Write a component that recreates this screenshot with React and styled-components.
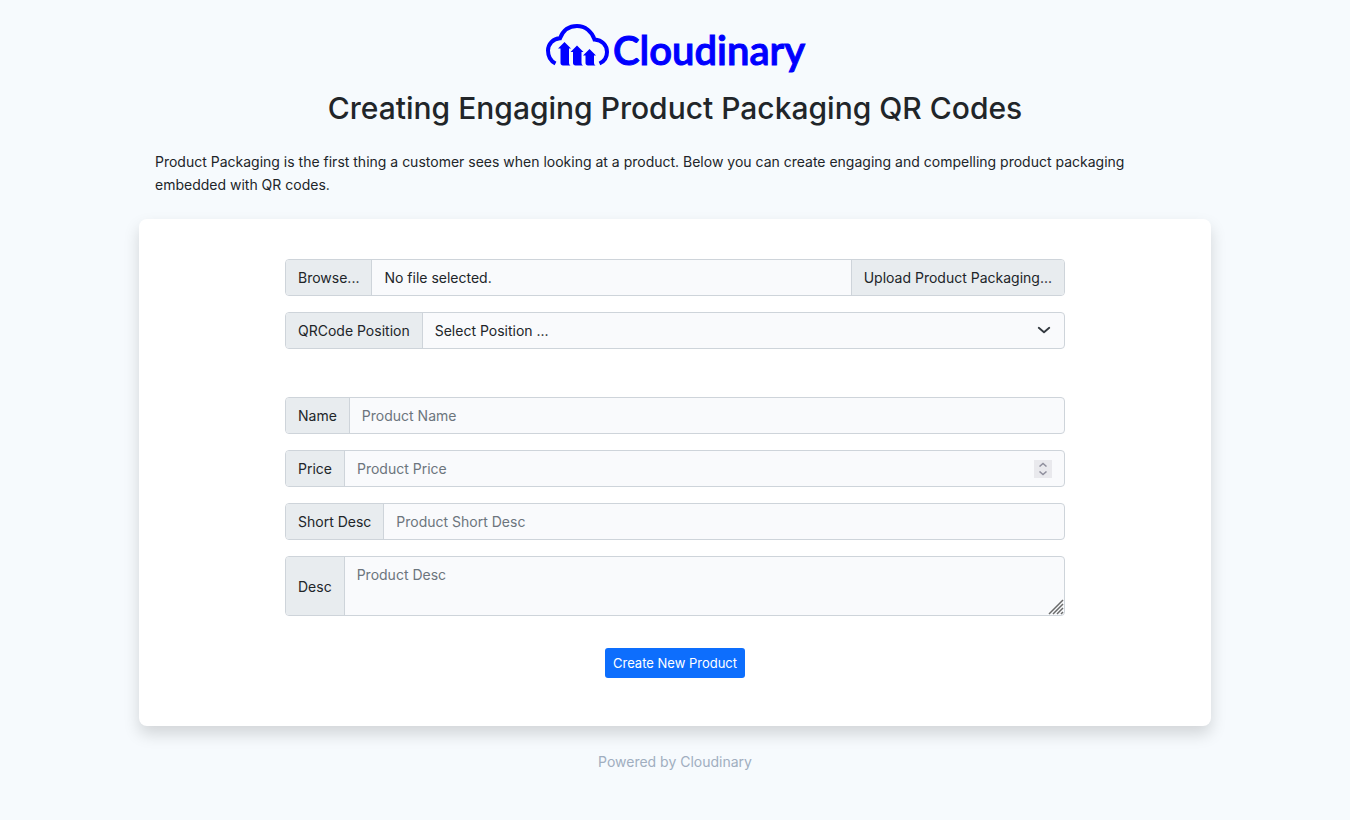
import React, { useRef, useState } from 'react';
import styled, { createGlobalStyle } from 'styled-components';

const GlobalStyle = createGlobalStyle`
  *,
  *::before,
  *::after {
    box-sizing: border-box;
  }

  body {
    margin: 0;
    background-color: #f6fafd;
    color: #212529;
    font-family: Inter, sans-serif;
    font-size: 14px;
    line-height: 23px;
  }

  input,
  select,
  textarea,
  button {
    font: inherit;
    color: inherit;
  }
`;

const Page = styled.div`
  max-width: 1072px;
  margin: 0 auto;
  padding: 24px 0 48px;
`;

const Header = styled.header`
  padding: 0 16px;
`;

const Logo = styled.svg`
  display: block;
  width: 258px;
  height: 50px;
  margin: 0 auto 16px;
  overflow: visible;
  fill: #0000ff;
`;

const Wordmark = styled.text`
  font-family: Lato, sans-serif;
  font-size: 40px;
  font-weight: 600;
  stroke: #0000ff;
  stroke-width: 1px;
`;

const Title = styled.h1`
  margin: 0 0 24px;
  font-size: 30px;
  font-weight: 500;
  line-height: 36px;
  text-align: center;
`;

const Intro = styled.p`
  max-width: 1000px;
  margin: 0 0 23px;
`;

const Card = styled.main`
  padding: 40px 16px 48px;
  border-radius: 8px;
  background-color: white;
  box-shadow: 0 8px 16px rgba(0, 0, 0, 0.15);
`;

const Form = styled.form`
  display: flex;
  flex-direction: column;
  gap: 32px;
  max-width: 780px;
  margin: 0 auto;
`;

const Fields = styled.div`
  display: flex;
  flex-direction: column;
  gap: 16px;
  margin-bottom: ${({ $spaced }) => ($spaced ? '16px' : '0')};
`;

const InputGroup = styled.div`
  position: relative;
  display: flex;
  min-height: 37px;
  overflow: hidden;
  border: 1px solid #ced4da;
  border-radius: 4px;
  background-color: #f9fafc;

  &:focus-within {
    border-color: #86b7fe;
  }
`;

const Addon = styled.label`
  display: flex;
  flex: none;
  align-items: center;
  padding: 0 12px;
  background-color: #e8ecef;
  border: 0 solid #ced4da;
  border-right-width: ${({ $end }) => ($end ? '0' : '1px')};
  border-left-width: ${({ $end }) => ($end ? '1px' : '0')};
`;

const FileName = styled.span`
  flex: 1;
  padding: 6px 12px;
`;

const FileInput = styled.input`
  position: absolute;
  inset: 0;
  width: 100%;
  opacity: 0;
  cursor: pointer;
`;

const Control = styled.input`
  flex: 1;
  min-width: 0;
  padding: 6px 12px;
  border: 0;
  outline: 0;
  background: transparent;
  appearance: none;

  &::placeholder {
    color: #6c757d;
    opacity: 1;
  }

  &[type='number'] {
    appearance: textfield;
  }

  &::-webkit-inner-spin-button {
    appearance: none;
  }
`;

const TextArea = styled(Control)`
  display: block;
  min-height: 58px;
  resize: vertical;

  &::-webkit-resizer {
    display: none;
  }
`;

const Chevron = styled.svg`
  position: absolute;
  top: 11px;
  right: 12px;
  width: 16px;
  height: 12px;
  pointer-events: none;
`;

const Grip = styled.svg`
  position: absolute;
  right: 0;
  bottom: 0;
  width: 16px;
  height: 16px;
  pointer-events: none;
`;

const Spinner = styled.div`
  display: flex;
  flex-direction: column;
  align-self: center;
  width: 18px;
  height: 18px;
  margin-right: 12px;
  background-color: #e9e9ed;
`;

const SpinButton = styled.button`
  display: flex;
  align-items: center;
  justify-content: center;
  height: 9px;
  padding: 0;
  border: 0;
  background: transparent;
`;

const SubmitButton = styled.button`
  align-self: center;
  padding: 4px 8px;
  border: 0;
  border-radius: 3px;
  background-color: #0d6efd;
  color: white;
  font-size: 13px;
  line-height: 22px;
  cursor: pointer;
`;

const Footer = styled.footer`
  margin-top: 24px;
  color: #a0aec0;
  line-height: 24px;
  text-align: center;
`;

const positions = ['Top Left', 'Top Right', 'Bottom Left', 'Bottom Right'];

function CloudinaryLogo() {
  return (
    <Logo viewBox="0 0 258 50" role="img" aria-label="Cloudinary">
      <path
        d="M9.5 39.5C4.500 37 2 32 2 26.500C2 20 7 14.500 14 14.200C17 6.500 23 2 31 2C39 2 46 7.500 48.500 15.500C56 16 61 21 61 28C61 33.500 58 37.500 53.500 39.500"
        fill="none"
        stroke="#0000ff"
        strokeWidth="4"
      />
      <path d="M18.500 18L25 24.500H23V38.500C23 40 23.500 41 24.500 41.500H17C15.500 41.500 14.500 40.500 14.500 39V24.500H12Z" />
      <path d="M31 21.500L37.500 28H35.500V38.500C35.500 40 36 41 37 41.500H29.500C28 41.500 27 40.500 27 39V28H24.500Z" />
      <path d="M43.500 25L50 31.500H48V38.500C48 40 48.500 41 49.500 41.500H42C40.500 41.500 39.500 40.500 39.500 39V31.500H37Z" />
      <Wordmark x="67" y="41">
        Cloudinary
      </Wordmark>
    </Logo>
  );
}

function PriceInput() {
  const input = useRef(null);
  return (
    <InputGroup>
      <Addon htmlFor="price">Price</Addon>
      <Control
        id="price"
        type="number"
        placeholder="Product Price"
        ref={input}
      />
      <Spinner>
        <SpinButton
          type="button"
          aria-label="Increase price"
          onClick={() => input.current.stepUp()}
        >
          <svg width="8" height="5" fill="none" stroke="#8f8f9d" strokeWidth="1.5">
            <path d="M.5 4.500 4 1.500 7.500 4.500" />
          </svg>
        </SpinButton>
        <SpinButton
          type="button"
          aria-label="Decrease price"
          onClick={() => input.current.stepDown()}
        >
          <svg width="8" height="5" fill="none" stroke="#8f8f9d" strokeWidth="1.5">
            <path d="M.5 .5 4 3.500 7.500 .5" />
          </svg>
        </SpinButton>
      </Spinner>
    </InputGroup>
  );
}

function App() {
  const [fileName, setFileName] = useState('');

  return (
    <>
      <GlobalStyle />
      <Page>
        <Header>
          <CloudinaryLogo />
          <Title>Creating Engaging Product Packaging QR Codes</Title>
          <Intro>
            Product Packaging is the first thing a customer sees when looking at
            a product. Below you can create engaging and compelling product
            packaging embedded with QR codes.
          </Intro>
        </Header>
        <Card>
          <Form onSubmit={event => event.preventDefault()}>
            <Fields $spaced>
              <InputGroup>
                <Addon as="span">Browse...</Addon>
                <FileName>{fileName || 'No file selected.'}</FileName>
                <Addon htmlFor="packaging" $end>
                  Upload Product Packaging...
                </Addon>
                <FileInput
                  id="packaging"
                  type="file"
                  onChange={event => {
                    const file = event.target.files[0];
                    setFileName(file ? file.name : '');
                  }}
                />
              </InputGroup>
              <InputGroup>
                <Addon htmlFor="position">QRCode Position</Addon>
                <Control as="select" id="position" defaultValue="">
                  <option value="">Select Position ...</option>
                  {positions.map(position => (
                    <option key={position}>{position}</option>
                  ))}
                </Control>
                <Chevron viewBox="0 0 16 16" fill="none" stroke="#343a40">
                  <path
                    d="m1 5 7 6 7-6"
                    strokeWidth="2.5"
                    strokeLinecap="round"
                    strokeLinejoin="round"
                  />
                </Chevron>
              </InputGroup>
            </Fields>
            <Fields>
              <InputGroup>
                <Addon htmlFor="name">Name</Addon>
                <Control id="name" type="text" placeholder="Product Name" />
              </InputGroup>
              <PriceInput />
              <InputGroup>
                <Addon htmlFor="short-desc">Short Desc</Addon>
                <Control
                  id="short-desc"
                  type="text"
                  placeholder="Product Short Desc"
                />
              </InputGroup>
              <InputGroup>
                <Addon htmlFor="desc">Desc</Addon>
                <TextArea
                  as="textarea"
                  id="desc"
                  rows="2"
                  placeholder="Product Desc"
                />
                <Grip viewBox="0 0 16 16" stroke="#6b6b6b" strokeWidth="1.5">
                  <path d="M1 15 15 1M5 15 15 5M9 15 15 9M13 15 15 13" />
                </Grip>
              </InputGroup>
            </Fields>
            <SubmitButton type="submit">Create New Product</SubmitButton>
          </Form>
        </Card>
        <Footer>Powered by Cloudinary</Footer>
      </Page>
    </>
  );
}

export default App;
